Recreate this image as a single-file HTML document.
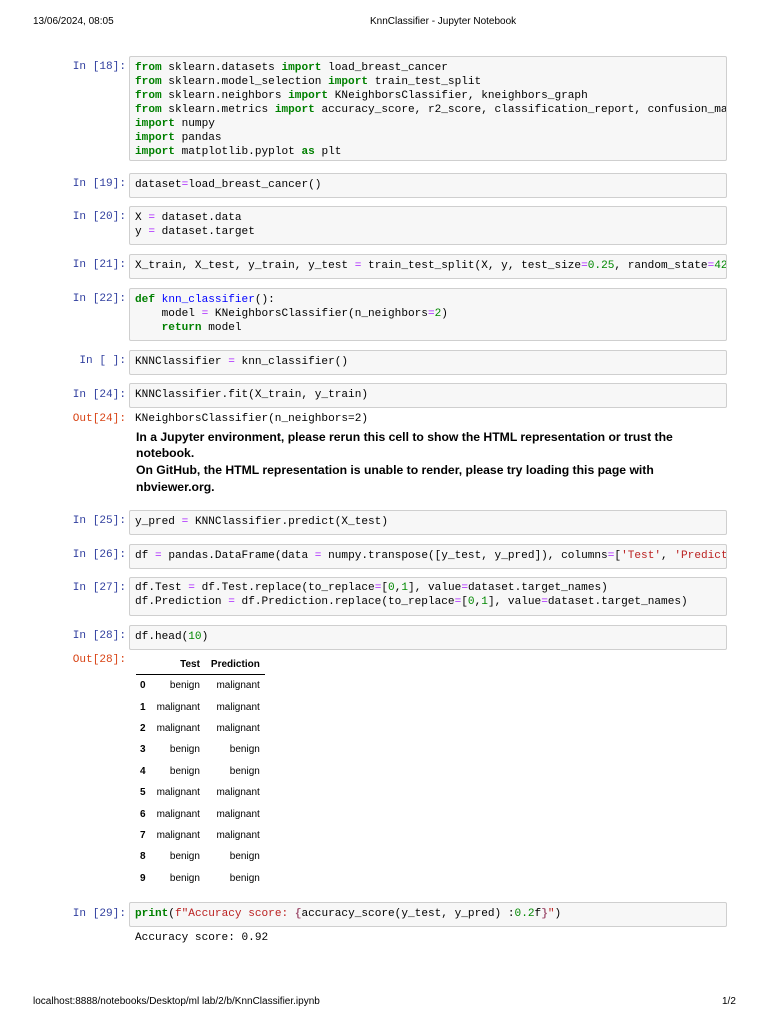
<!DOCTYPE html>
<html><head><meta charset="utf-8">
<style>
body{margin:0;width:768px;height:1024px;background:#fff;position:relative;overflow:hidden;font-family:"Liberation Sans",sans-serif;}
.a{position:absolute;white-space:nowrap;}
.hd{font-size:10px;color:#000;}
.p{position:absolute;width:126px;left:0;text-align:right;font-family:"Liberation Mono",monospace;font-size:11.1px;line-height:14px;color:#303F9F;white-space:nowrap;}
.o{color:#D84315;}
.box{position:absolute;left:129px;width:596px;background:#f7f7f7;border:1px solid #cfcfcf;border-radius:2px;overflow:hidden;}
.c{position:absolute;left:5px;font-family:"Liberation Mono",monospace;font-size:11.1px;line-height:14px;color:#000;white-space:pre;}
.k{color:#008000;font-weight:bold}
.n{color:#008800}
.s{color:#BA2121}
.e{color:#AA22FF}
.m{position:absolute;left:135px;font-family:"Liberation Mono",monospace;font-size:11.1px;line-height:14px;white-space:pre;}
.b{position:absolute;left:136px;font-weight:bold;font-size:12.2px;line-height:16px;white-space:nowrap;}
table{position:absolute;left:136px;top:655px;border-collapse:collapse;font-size:10px;}
th,td{text-align:right;padding:0 5px 0 6px;height:21.4px;}
td:first-child,th:first-child{padding-left:4px;}
th{font-weight:bold;height:19px;}
thead tr{border-bottom:1px solid #000;}
td:first-child{font-weight:bold;}
</style></head><body>
<div class="a hd" style="left:33px;top:16px">13/06/2024, 08:05</div>
<div class="a hd" style="left:370px;top:16px">KnnClassifier - Jupyter Notebook</div>
<div class="a hd" style="left:33px;top:996px">localhost:8888/notebooks/Desktop/ml lab/2/b/KnnClassifier.ipynb</div>
<div class="a hd" style="left:722px;top:996px">1/2</div>

<div class="p" style="top:60px">In [18]:</div>
<div class="box" style="top:56px;height:103px">
<div class="c" style="top:4px"><span class="k">from</span> sklearn.datasets <span class="k">import</span> load_breast_cancer
<span class="k">from</span> sklearn.model_selection <span class="k">import</span> train_test_split
<span class="k">from</span> sklearn.neighbors <span class="k">import</span> KNeighborsClassifier, kneighbors_graph
<span class="k">from</span> sklearn.metrics <span class="k">import</span> accuracy_score, r2_score, classification_report, confusion_matrix
<span class="k">import</span> numpy
<span class="k">import</span> pandas
<span class="k">import</span> matplotlib.pyplot <span class="k">as</span> plt</div></div>

<div class="p" style="top:177px">In [19]:</div>
<div class="box" style="top:173px;height:23px"><div class="c" style="top:4px">dataset<span class="e">=</span>load_breast_cancer()</div></div>

<div class="p" style="top:210px">In [20]:</div>
<div class="box" style="top:206px;height:37px"><div class="c" style="top:4px">X <span class="e">=</span> dataset.data
y <span class="e">=</span> dataset.target</div></div>

<div class="p" style="top:258px">In [21]:</div>
<div class="box" style="top:254px;height:23px"><div class="c" style="top:4px">X_train, X_test, y_train, y_test <span class="e">=</span> train_test_split(X, y, test_size<span class="e">=</span><span class="n">0.25</span>, random_state<span class="e">=</span><span class="n">42</span>)</div></div>

<div class="p" style="top:292px">In [22]:</div>
<div class="box" style="top:288px;height:51px"><div class="c" style="top:4px"><span class="k">def</span> <span style="color:#0000FF">knn_classifier</span>():
    model <span class="e">=</span> KNeighborsClassifier(n_neighbors<span class="e">=</span><span class="n">2</span>)
    <span class="k">return</span> model</div></div>

<div class="p" style="top:354px">In [ ]:</div>
<div class="box" style="top:350px;height:23px"><div class="c" style="top:4px">KNNClassifier <span class="e">=</span> knn_classifier()</div></div>

<div class="p" style="top:388px">In [24]:</div>
<div class="box" style="top:383px;height:23px"><div class="c" style="top:4px">KNNClassifier.fit(X_train, y_train)</div></div>

<div class="p o" style="top:412px">Out[24]:</div>
<div class="m" style="top:412px">KNeighborsClassifier(n_neighbors=2)</div>
<div class="b" style="top:429px">In a Jupyter environment, please rerun this cell to show the HTML representation or trust the</div>
<div class="b" style="top:445px">notebook.</div>
<div class="b" style="top:462px">On GitHub, the HTML representation is unable to render, please try loading this page with</div>
<div class="b" style="top:479px">nbviewer.org.</div>

<div class="p" style="top:514px">In [25]:</div>
<div class="box" style="top:510px;height:23px"><div class="c" style="top:4px">y_pred <span class="e">=</span> KNNClassifier.predict(X_test)</div></div>

<div class="p" style="top:548px">In [26]:</div>
<div class="box" style="top:544px;height:23px"><div class="c" style="top:4px">df <span class="e">=</span> pandas.DataFrame(data <span class="e">=</span> numpy.transpose([y_test, y_pred]), columns<span class="e">=</span>[<span class="s">'Test'</span>, <span class="s">'Prediction'</span>])</div></div>

<div class="p" style="top:581px">In [27]:</div>
<div class="box" style="top:577px;height:37px"><div class="c" style="top:3px">df.Test <span class="e">=</span> df.Test.replace(to_replace<span class="e">=</span>[<span class="n">0</span>,<span class="n">1</span>], value<span class="e">=</span>dataset.target_names)
df.Prediction <span class="e">=</span> df.Prediction.replace(to_replace<span class="e">=</span>[<span class="n">0</span>,<span class="n">1</span>], value<span class="e">=</span>dataset.target_names)</div></div>

<div class="p" style="top:629px">In [28]:</div>
<div class="box" style="top:625px;height:23px"><div class="c" style="top:4px">df.head(<span class="n">10</span>)</div></div>

<div class="p o" style="top:653px">Out[28]:</div>
<table>
<thead><tr><th></th><th>Test</th><th>Prediction</th></tr></thead>
<tbody>
<tr><td>0</td><td>benign</td><td>malignant</td></tr>
<tr><td>1</td><td>malignant</td><td>malignant</td></tr>
<tr><td>2</td><td>malignant</td><td>malignant</td></tr>
<tr><td>3</td><td>benign</td><td>benign</td></tr>
<tr><td>4</td><td>benign</td><td>benign</td></tr>
<tr><td>5</td><td>malignant</td><td>malignant</td></tr>
<tr><td>6</td><td>malignant</td><td>malignant</td></tr>
<tr><td>7</td><td>malignant</td><td>malignant</td></tr>
<tr><td>8</td><td>benign</td><td>benign</td></tr>
<tr><td>9</td><td>benign</td><td>benign</td></tr>
</tbody></table>

<div class="p" style="top:907px">In [29]:</div>
<div class="box" style="top:902px;height:23px"><div class="c" style="top:4px"><span class="k">print</span>(<span class="s">f"Accuracy score: </span><span style="color:#A45A77;font-weight:bold">{</span>accuracy_score(y_test, y_pred) :<span class="n">0.2</span>f<span style="color:#A45A77;font-weight:bold">}</span><span class="s">"</span>)</div></div>
<div class="m" style="top:931px">Accuracy score: 0.92</div>
</body></html>
